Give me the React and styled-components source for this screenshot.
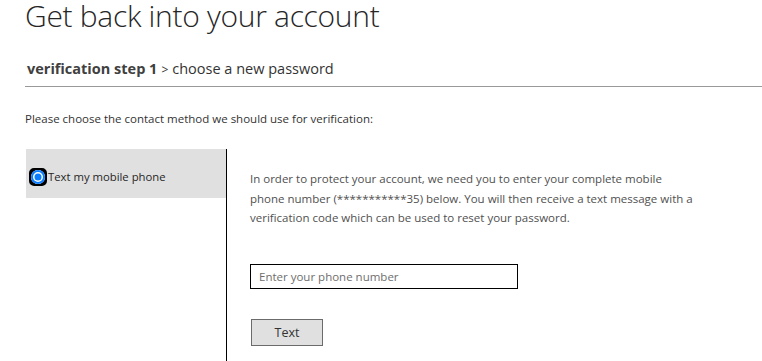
import React from 'react';
import styled, { createGlobalStyle } from 'styled-components';

const GlobalStyle = createGlobalStyle`
  body {
    margin: 0;
    background: #fff;
    font-family: "Open Sans", "Noto Sans", sans-serif;
    color: #333;
  }
`;

const Page = styled.div`
  padding-left: 25px;
  height: 361px;
  overflow: hidden;
  display: flex;
  flex-direction: column;
`;

const Title = styled.h1`
  margin: 0;
  padding-top: 4px;
  font-size: 30px;
  font-weight: 300;
  line-height: 24px;
  color: #262626;
  letter-spacing: -0.3px;
`;

const Steps = styled.div`
  margin-top: 31px;
  padding-left: 2px;
  font-size: 14.5px;
  line-height: 20px;
  color: #333;
  padding-bottom: 6px;
  border-bottom: 1px solid #999;
`;

const Current = styled.span`
  font-weight: 700;
  color: #404040;
`;

const Sep = styled.span`
  font-size: 12px;
  margin: 0 4px;
`;

const Intro = styled.p`
  margin: 24px 0 0;
  font-size: 11.5px;
  line-height: 16px;
  color: #333;
`;

const Body = styled.div`
  margin-top: 22px;
  display: flex;
  flex: 1;
`;

const Methods = styled.div`
  width: 200px;
  margin-left: 1px;
  border-right: 1px solid #000;
`;

const Method = styled.label`
  display: flex;
  align-items: center;
  height: 49px;
  padding-top: 6px;
  box-sizing: border-box;
  background: ${p => (p.$active ? '#e0e0e0' : 'transparent')};
  font-size: 11.3px;
  color: #262626;
`;

const RadioFocus = styled.span`
  display: inline-flex;
  align-items: center;
  justify-content: center;
  width: 18px;
  height: 18px;
  margin: 0 1px 0 3px;
  box-sizing: border-box;
  border: 2px solid #000;
  border-radius: 5px;
  background: #000;
`;

const Radio = styled.input`
  appearance: none;
  margin: 0;
  width: 14px;
  height: 14px;
  border-radius: 50%;
  background: #0a7cff;
  box-shadow: inset 0 0 0 2px #0a7cff, inset 0 0 0 3.5px #fff;
  outline: none;
`;

const Details = styled.div`
  padding: 20px 0 0 23px;
  width: 446px;
`;

const Info = styled.p`
  margin: 0;
  font-size: 11.5px;
  line-height: 19.5px;
  color: #505050;
`;

const PhoneInput = styled.input`
  display: block;
  margin-top: 36px;
  width: 268px;
  height: 25px;
  box-sizing: border-box;
  border: 1px solid #000;
  padding: 0 8px;
  font-family: inherit;
  font-size: 11.5px;
  outline: none;
  &::placeholder {
    color: #6e6e6e;
  }
`;

const Button = styled.button`
  display: block;
  margin: 30px 0 0 1px;
  width: 72px;
  height: 27px;
  background: #e0e0e0;
  border: 1px solid #6b6b6b;
  font-family: inherit;
  font-size: 12.5px;
  color: #333;
  padding: 0;
`;

export default function App() {
  return (
    <>
      <GlobalStyle />
      <Page>
        <Title>Get back into your account</Title>
        <Steps>
          <Current>verification step 1</Current>
          <Sep>&gt;</Sep>
          choose a new password
        </Steps>
        <Intro>Please choose the contact method we should use for verification:</Intro>
        <Body>
          <Methods>
            <Method $active>
              <RadioFocus>
                <Radio type="radio" name="method" defaultChecked />
              </RadioFocus>
              Text my mobile phone
            </Method>
          </Methods>
          <Details>
            <Info>
              In order to protect your account, we need you to enter your complete mobile
              phone number (***********35) below. You will then receive a text message with a
              verification code which can be used to reset your password.
            </Info>
            <PhoneInput placeholder="Enter your phone number" />
            <Button>Text</Button>
          </Details>
        </Body>
      </Page>
    </>
  );
}
